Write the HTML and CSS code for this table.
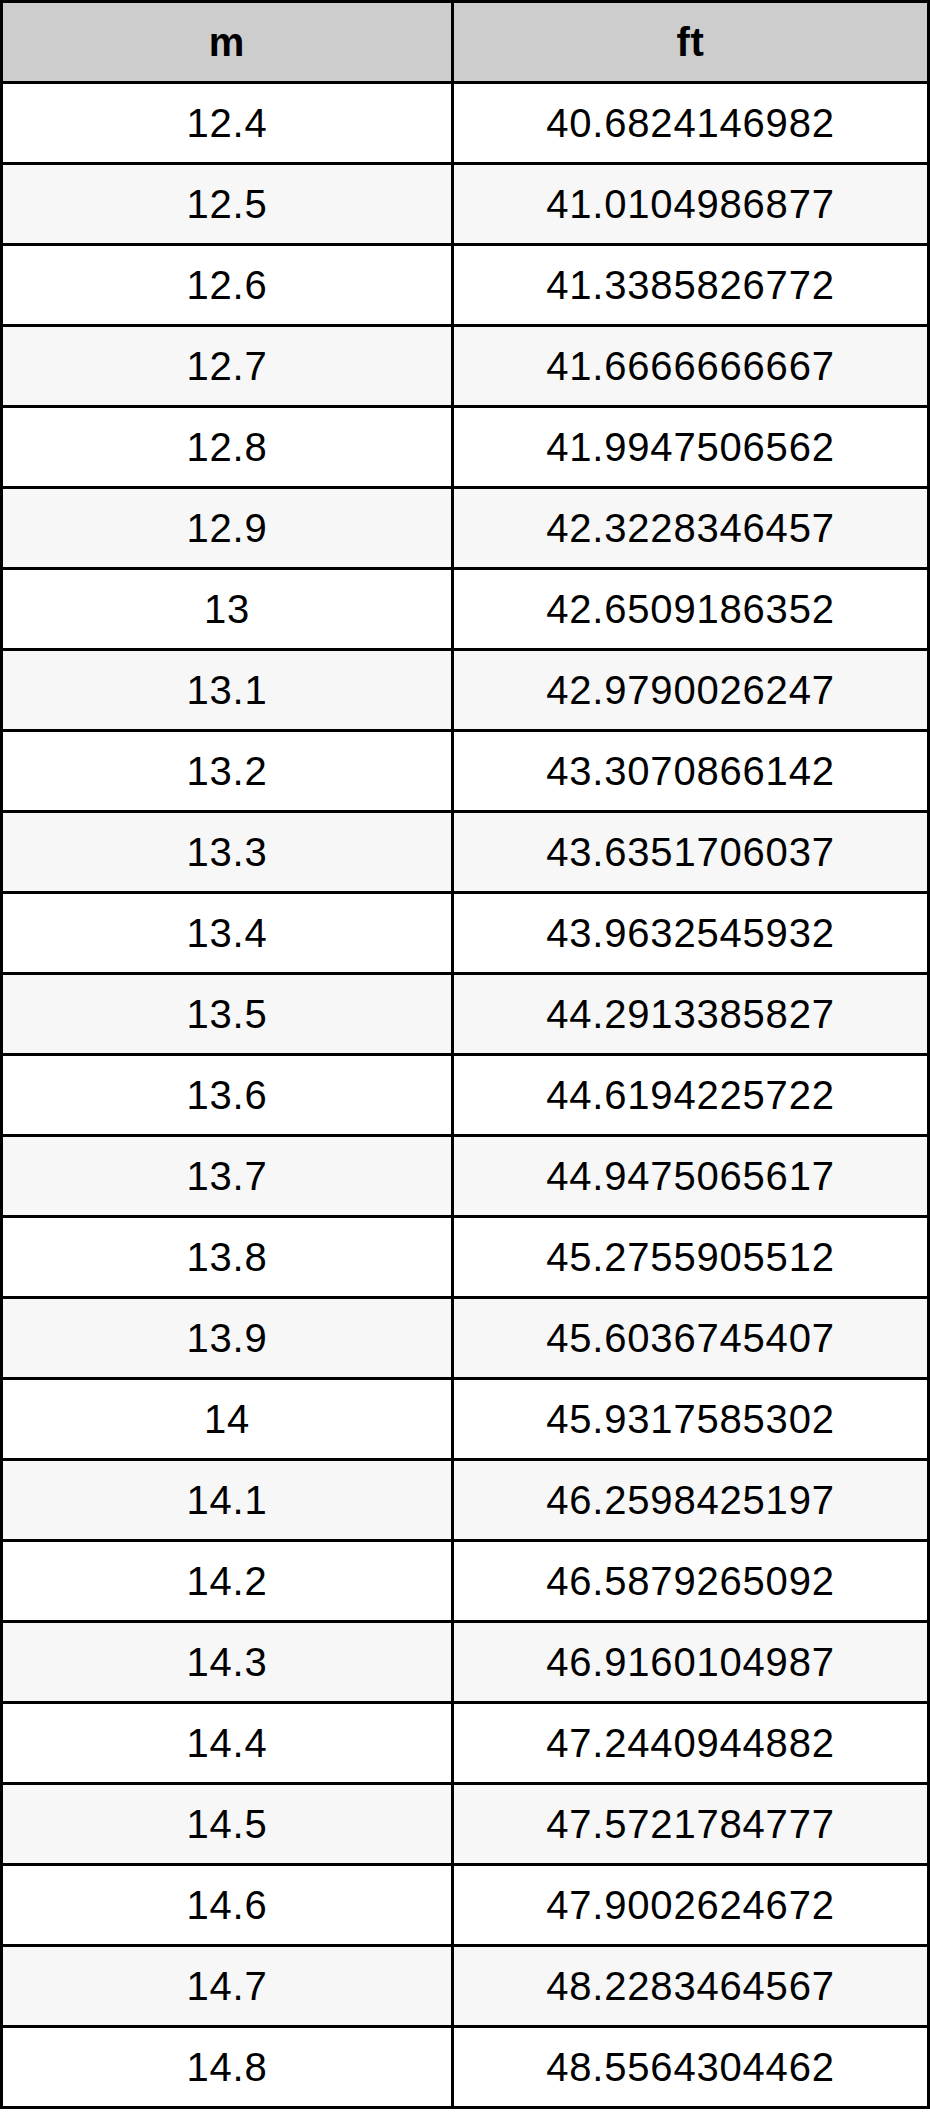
FILE: index.html
```html
<!DOCTYPE html>
<html lang="en">
<head>
<meta charset="utf-8">
<title>m to ft</title>
<link rel="stylesheet" href="styles.css">
</head>
<body>
<table class="conv">
<thead>
<tr><th class="c1">m</th><th class="c2">ft</th></tr>
</thead>
<tbody>
<tr><td>12.4</td><td>40.6824146982</td></tr>
<tr><td>12.5</td><td>41.0104986877</td></tr>
<tr><td>12.6</td><td>41.3385826772</td></tr>
<tr><td>12.7</td><td>41.6666666667</td></tr>
<tr><td>12.8</td><td>41.9947506562</td></tr>
<tr><td>12.9</td><td>42.3228346457</td></tr>
<tr><td>13</td><td>42.6509186352</td></tr>
<tr><td>13.1</td><td>42.9790026247</td></tr>
<tr><td>13.2</td><td>43.3070866142</td></tr>
<tr><td>13.3</td><td>43.6351706037</td></tr>
<tr><td>13.4</td><td>43.9632545932</td></tr>
<tr><td>13.5</td><td>44.2913385827</td></tr>
<tr><td>13.6</td><td>44.6194225722</td></tr>
<tr><td>13.7</td><td>44.9475065617</td></tr>
<tr><td>13.8</td><td>45.2755905512</td></tr>
<tr><td>13.9</td><td>45.6036745407</td></tr>
<tr><td>14</td><td>45.9317585302</td></tr>
<tr><td>14.1</td><td>46.2598425197</td></tr>
<tr><td>14.2</td><td>46.5879265092</td></tr>
<tr><td>14.3</td><td>46.9160104987</td></tr>
<tr><td>14.4</td><td>47.2440944882</td></tr>
<tr><td>14.5</td><td>47.5721784777</td></tr>
<tr><td>14.6</td><td>47.9002624672</td></tr>
<tr><td>14.7</td><td>48.2283464567</td></tr>
<tr><td>14.8</td><td>48.5564304462</td></tr>
</tbody>
</table>
</body>
</html>
```

FILE: styles.css
```css
html, body {
  margin: 0;
  padding: 0;
  background: #ffffff;
}

.conv {
  width: 930px;
  table-layout: fixed;
  border-collapse: separate;
  border-spacing: 0;
  border-right: 3px solid #000;
  border-bottom: 3px solid #000;
  font-family: "Liberation Sans", Arial, sans-serif;
  font-size: 40px;
  letter-spacing: 0.8px;
  color: #000;
}

.conv th,
.conv td {
  box-sizing: border-box;
  height: 81px;
  padding: 0;
  border-left: 3px solid #000;
  border-top: 3px solid #000;
  text-align: center;
  vertical-align: middle;
  line-height: 46px;
}

.conv th {
  background: #cdcdcd;
  font-weight: bold;
}

.conv .c1 {
  width: 451px;
}

.conv .c2 {
  width: 476px;
}

.conv tbody tr:nth-child(odd) td {
  background: #ffffff;
}

.conv tbody tr:nth-child(even) td {
  background: #f7f7f7;
}
```
